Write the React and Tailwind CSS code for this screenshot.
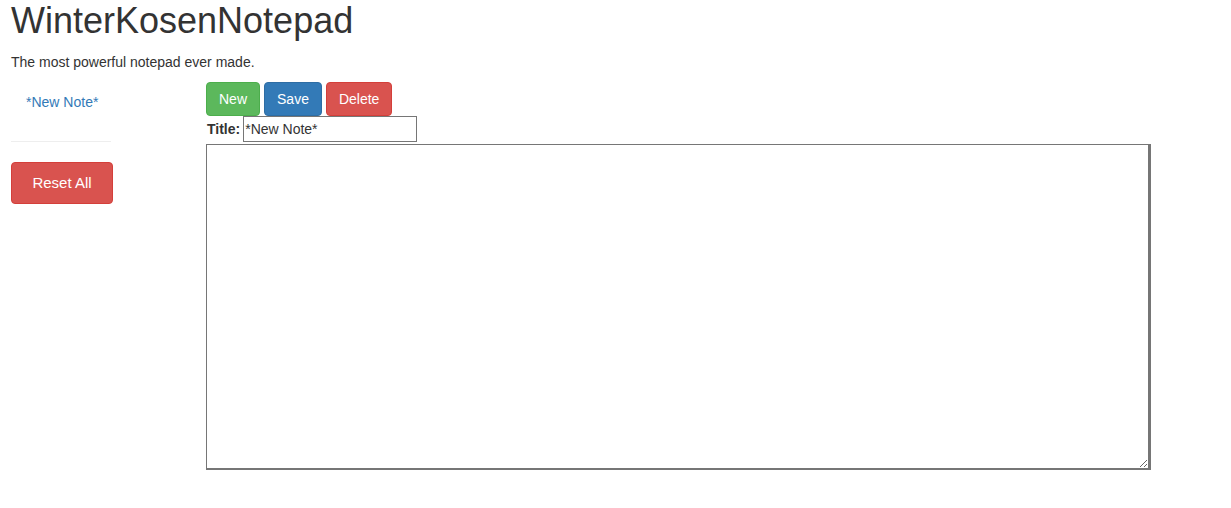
export default function App() {
  return (
    <div className="px-[11px] text-[14px] leading-[20px] text-[#333] bg-white min-h-[508px]" style={{ fontFamily: '"Liberation Sans", Arial, sans-serif' }}>
      <h1 className="pt-[1px] text-[36px] leading-[39.6px] font-normal text-[#333]">WinterKosenNotepad</h1>
      <p className="mt-[11px]">The most powerful notepad ever made.</p>
      <div className="mt-[10px] flex">
        <div className="w-[102px] shrink-0">
          <a className="block px-[15px] py-[10px] text-[#337ab7] whitespace-nowrap">*New Note*</a>
          <div className="mt-[19px] border-t border-[#eee] w-[100px]"></div>
          <button className="mt-[20px] w-[102px] h-[42px] rounded-[4px] bg-[#d9534f] border border-[#d43f3a] text-white text-[15px]">Reset All</button>
        </div>
        <div className="ml-[93px] flex flex-col">
          <div className="flex gap-[4px]">
            <button className="h-[34px] px-[12px] rounded-[4px] bg-[#5cb85c] border border-[#4cae4c] text-white">New</button>
            <button className="h-[34px] px-[12px] rounded-[4px] bg-[#337ab7] border border-[#2e6da4] text-white">Save</button>
            <button className="h-[34px] px-[12px] rounded-[4px] bg-[#d9534f] border border-[#d43f3a] text-white">Delete</button>
          </div>
          <div className="flex items-center">
            <label className="font-bold ml-[1px] mr-[3px]">Title:</label>
            <input defaultValue="*New Note*" className="w-[174px] h-[26px] border border-[#767676] px-[1px] text-[14px] text-[#333] outline-none" style={{ fontFamily: '"Liberation Sans", Arial, sans-serif' }} />
          </div>
          <textarea className="mt-[2px] w-[945px] h-[326px] border-t border-l border-r-[3px] border-b-[2px] border-[#767676] outline-none"></textarea>
        </div>
      </div>
    </div>
  );
}
